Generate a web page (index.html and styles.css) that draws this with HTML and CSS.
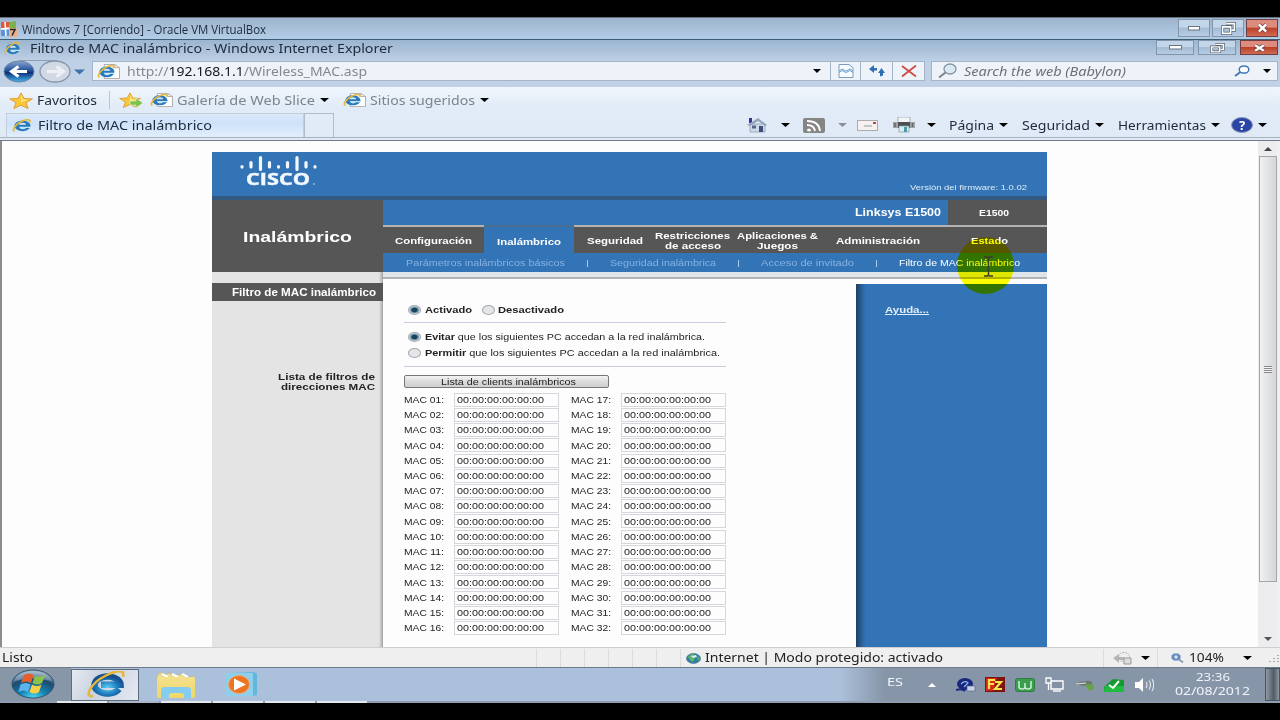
FILE: index.html
```html
<!DOCTYPE html>
<html lang="es">
<head>
  <meta charset="UTF-8" />
  <title>Filtro de MAC inalámbrico</title>
  <link rel="stylesheet" href="styles.css">
</head>
<body>

  <!-- Iconos compartidos -->
  <svg width="0" height="0" class="defs">
    <defs>
      <radialGradient id="ieBlue" cx="50%" cy="65%" r="65%">
        <stop offset="0" stop-color="#5fd0f5"/><stop offset=".6" stop-color="#1f7fc0"/><stop offset="1" stop-color="#174f8e"/>
      </radialGradient>
      <radialGradient id="orb" cx="50%" cy="100%" r="95%">
        <stop offset="0" stop-color="#4fe0fa"/><stop offset=".35" stop-color="#1583b0"/><stop offset=".7" stop-color="#1d4a70"/><stop offset="1" stop-color="#8fa9bf"/>
      </radialGradient>
      <linearGradient id="backBlue" x2="0" y2="1">
        <stop offset="0" stop-color="#8aa6d0"/><stop offset=".45" stop-color="#24529c"/><stop offset=".55" stop-color="#0d3077"/><stop offset="1" stop-color="#43b5ef"/>
      </linearGradient>
      <linearGradient id="folder" x2="0" y2="1">
        <stop offset="0" stop-color="#f3e08d"/><stop offset="1" stop-color="#f0d765"/>
      </linearGradient>
      <symbol id="ie" viewBox="0 0 20 16" preserveAspectRatio="none">
        <ellipse cx="10.5" cy="8.4" rx="8" ry="6.600" fill="#2a79bd"/>
        <path d="M7 7q0-2.500 3.500-2.500T14 7z" fill="#d5ebf7"/>
        <path d="M7 9.400h12v1.600h-5q-1 1.500-3.500 1.500T7 9.400z" fill="#c4e5f6"/>
        <path d="M2.400 15.200C-1 12 7 2 15 1c3-.4 3.400 1.200 2.600 2.800" fill="none" stroke="#e5b93a" stroke-width="1.900"/>
      </symbol>
      <symbol id="iepage" viewBox="0 0 22 16" preserveAspectRatio="none">
        <path d="M7 .5h10l4.500 3.500v11.500H7z" fill="#fff" stroke="#9a9a9a" stroke-width=".8"/>
        <path d="M17 .5V4h4.500" fill="none" stroke="#9a9a9a" stroke-width=".8"/>
        <use href="#ie" x="0" y="1" width="18" height="14"/>
      </symbol>
      <symbol id="arrow" viewBox="0 0 8 4" preserveAspectRatio="none"><path d="M0 0h8L4 4z"/></symbol>
      <symbol id="star" viewBox="0 0 24 18" preserveAspectRatio="none">
        <path d="M12 1l3 5.800 8.300.5-6.300 4 2.200 6.200L12 14l-7.200 3.500L7 11.300.7 7.300 9 6.800z" fill="#fbc63a" stroke="#d9962a" stroke-width=".9"/>
        <path d="M12 3l2 4.600 5 .5-7 3z" fill="#ffe56f"/>
      </symbol>
      <symbol id="restore" viewBox="0 0 14 12" preserveAspectRatio="none">
        <path d="M5 1.500h7.500v6H10M1.500 4.500H9v6H1.500z" fill="none" stroke="#56606e" stroke-width="2.800"/>
        <path d="M5 1.500h7.500v6H10M1.500 4.500H9v6H1.500z" fill="none" stroke="#fff" stroke-width="1.500"/>
      </symbol>
      <symbol id="close" viewBox="0 0 12 10" preserveAspectRatio="none">
        <path d="M2 1.500l8 7M10 1.500l-8 7" stroke="#6b4048" stroke-width="4"/>
        <path d="M2 1.500l8 7M10 1.500l-8 7" stroke="#fff" stroke-width="2.500"/>
      </symbol>
    </defs>
  </svg>

  <!-- Ventana VirtualBox -->
  <div class="vbox-title">
    <svg class="vbox-icon" viewBox="0 0 16 16"><path d="M0 1h9l-1 7H0z" fill="#e0593b"/><path d="M0 9h8v6H0z" fill="#5d93d6"/><path d="M9 1l6-1v7H9z" fill="#78b44b"/><path d="M8 7h8v9H8z" fill="#e9b18a"/><path d="M4 1L5 15M0 8l8-1" stroke="#fff" stroke-width="1.500"/><path d="M9 8.500h5l-3 6" fill="none" stroke="#222" stroke-width="1.500"/></svg>
    <span class="t" data-w="244">Windows 7 [Corriendo] - Oracle VM VirtualBox</span>
    <div class="win-buttons outer">
      <i class="wb"><svg width="12" height="5"><rect x=".5" y=".5" width="11" height="3.500" fill="#fff" stroke="#6b7480"/></svg></i>
      <i class="wb"><svg width="15" height="13"><use href="#restore"/></svg></i>
      <i class="wb red"><svg width="11" height="10"><use href="#close"/></svg></i>
    </div>
  </div>

  <!-- Internet Explorer -->
  <div class="ie-frame">
    <div class="ie-title">
      <svg width="17" height="13"><use href="#ie"/></svg>
      <span class="t" data-w="363">Filtro de MAC inalámbrico - Windows Internet Explorer</span>
      <div class="win-buttons inner">
        <i class="wb"><svg width="13" height="5"><rect x=".5" y=".5" width="12" height="3.500" fill="#fff" stroke="#6b7480"/></svg></i>
        <i class="wb"><svg width="15" height="10"><use href="#restore"/></svg></i>
        <i class="wb red"><svg width="13" height="8"><use href="#close"/></svg></i>
      </div>
    </div>
    <div class="ie-nav">
      <svg class="history" width="84" height="24" viewBox="0 0 84 24">
        <path d="M16 1.500h38" stroke="#8e9fb4"/>
        <ellipse cx="16" cy="12.500" rx="15" ry="10.500" fill="url(#backBlue)" stroke="#6c84a5"/>
        <path d="M24 12.500H10M15.500 7.500l-7 5 7 5" fill="none" stroke="#fff" stroke-width="3"/>
        <ellipse cx="52" cy="12.500" rx="15" ry="10.500" fill="#d0d9e4" stroke="#8796a9" stroke-width="1.300"/>
        <path d="M44 12.500h14M53.500 7.500l7 5-7 5" fill="none" stroke="#edf1f6" stroke-width="3"/>
        <path d="M71 10.500h11l-5.500 5z" fill="#3f72ad"/>
      </svg>
      <div class="address">
        <svg width="23" height="15"><use href="#iepage"/></svg>
        <span class="t url" data-w="240">http://<b>192.168.1.1</b>/Wireless_MAC.asp</span>
        <svg class="arrow" width="8" height="4"><use href="#arrow"/></svg>
      </div>
      <div class="nav-btn w30"><svg width="16" height="14" viewBox="0 0 16 14"><path d="M1 .5h10l4 3v10H1z" fill="#f8fbff" stroke="#7d9cc0"/><path d="M1 7l3-2 4 2 4-2 3 2M1 8.500l3-2 4 2 4-2 3 2" fill="none" stroke="#6fa2cf"/></svg></div>
      <div class="nav-btn w32"><svg width="16" height="12" viewBox="0 0 16 12"><path d="M0 4l5-4v3h3v2.500H5V8zM9 8l3.500-5L16 8h-2v2.500l-3 1V8z" fill="#2f6fb6"/></svg></div>
      <div class="nav-btn w32"><svg width="16" height="12" viewBox="0 0 16 12"><path d="M1 1l14 10.500M15 .5L1 11.500" stroke="#cf4a43" stroke-width="1.800"/></svg></div>
      <div class="search">
        <svg width="20" height="16" viewBox="0 0 20 16"><ellipse cx="13" cy="6" rx="6" ry="5" fill="#dbe9f4" stroke="#8094a8" stroke-width="1.300"/><path d="M8.500 9.500L2 14.500" stroke="#7f8790" stroke-width="2.200"/></svg>
        <span class="t" data-w="162">Search the web (Babylon)</span>
        <svg class="glass" width="16" height="12" viewBox="0 0 16 12"><ellipse cx="10" cy="4.500" rx="4.800" ry="3.600" fill="#fff" stroke="#4178b8" stroke-width="1.500"/><path d="M6.500 7L1 11" stroke="#4178b8" stroke-width="2"/></svg>
        <svg class="arrow" width="8" height="4"><use href="#arrow"/></svg>
      </div>
    </div>
  </div>

  <div class="ie-bars">
    <div class="favorites">
      <svg width="24" height="17"><use href="#star"/></svg>
      <span class="t dark" data-w="60">Favoritos</span>
      <i class="sep"></i>
      <svg class="addfav" width="24" height="16"><use href="#star" width="22" height="16"/><path d="M11 9h6V6l7 5-7 5v-3h-6z" fill="#7cc24b" stroke="#fff" stroke-width=".5"/></svg>
      <svg class="slice" width="23" height="14"><use href="#iepage"/></svg>
      <span class="t grey" data-w="138">Galería de Web Slice</span>
      <svg class="arrow" width="9" height="4"><use href="#arrow"/></svg>
      <svg class="sites" width="23" height="14"><use href="#iepage"/></svg>
      <span class="t grey" data-w="105">Sitios sugeridos</span>
      <svg class="arrow" width="9" height="4"><use href="#arrow"/></svg>
    </div>
    <div class="tabs">
      <div class="tab">
        <svg width="20" height="13"><use href="#ie"/></svg>
        <span class="t" data-w="174">Filtro de MAC inalámbrico</span>
      </div>
      <div class="newtab"></div>
      <div class="commands">
        <svg width="21" height="16" viewBox="0 0 21 16"><path d="M2 1h3v5H2z" fill="#34349a"/><path d="M3 7h15v8H3z" fill="#cfd9ea" stroke="#8793ab" stroke-width=".7"/><path d="M0 8l11-7 9 7-2 1-7-5-8 5z" fill="#94a5bd"/><path d="M12 9h4v6h-4z" fill="#3c4f7d"/><path d="M5 8.500h4v3H5z" fill="#55688c"/></svg>
        <svg class="arrow c1" width="9" height="4"><use href="#arrow"/></svg>
        <svg class="c2" width="22" height="15" viewBox="0 0 22 15"><rect width="22" height="15" rx="2" fill="#858585"/><g fill="none" stroke="#fff" stroke-width="1.800"><path d="M4 3q12 0 13 10M4 7q7 0 8 6"/></g><ellipse cx="6" cy="12" rx="2" ry="1.500" fill="#fff"/></svg>
        <svg class="arrow c3" width="9" height="4"><use href="#arrow"/></svg>
        <svg class="c4" width="21" height="11" viewBox="0 0 21 11"><rect x=".5" y=".5" width="20" height="10" fill="#f4f1f0" stroke="#b0abab"/><path d="M7 6h8" stroke="#999"/><path d="M16 2h3v2h-3z" fill="#c4473f"/></svg>
        <svg class="c5" width="24" height="16" viewBox="0 0 24 16"><path d="M6 0h12v6H6z" fill="#f2f4f6" stroke="#8f979d" stroke-width=".7"/><path d="M1 5h22v6H1z" fill="#a0a3a6"/><path d="M6 5h12v6H6z" fill="#4c5054"/><path d="M3 6v4M20.500 6v4" stroke="#666" stroke-width="1.500"/><path d="M7 9h10v6H7z" fill="#d6eef0" stroke="#85999d" stroke-width=".7"/><path d="M12 10h3v5h-3z" fill="#4a9ba6"/></svg>
        <svg class="arrow c6" width="9" height="4"><use href="#arrow"/></svg>
        <span class="t c7" data-w="45">Página</span>
        <svg class="arrow c8" width="9" height="4"><use href="#arrow"/></svg>
        <span class="t c9" data-w="68">Seguridad</span>
        <svg class="arrow c8" width="9" height="4"><use href="#arrow"/></svg>
        <span class="t c9" data-w="88">Herramientas</span>
        <svg class="arrow c8" width="9" height="4"><use href="#arrow"/></svg>
        <svg class="c10" width="22" height="16" viewBox="0 0 22 16"><ellipse cx="11" cy="8" rx="10.500" ry="7.500" fill="#2b45a4" stroke="#8b98bb"/><text x="11" y="12.500" text-anchor="middle" class="qm">?</text></svg>
        <svg class="arrow c8" width="9" height="4"><use href="#arrow"/></svg>
      </div>
    </div>
  </div>

  <!-- Página del router -->
  <div class="viewport">
    <div class="page">
      <div class="head">
        <svg class="cisco" width="82" height="36" viewBox="0 0 82 36">
          <g stroke="#f2f8ff" stroke-width="3.200" stroke-linecap="round">
            <path d="M4 11.500v.6M13 7.500v4.500M22.500 2.500v12M31.500 7.500v4.500M40.500 11.500v.6M49.500 7.500v4.500M59 2.500v12M68 7.500v4.500M77 11.500v.6"/>
          </g>
          <text x="8" y="30" textLength="64" lengthAdjust="spacingAndGlyphs">CISCO</text>
          <circle cx="76" cy="29" r=".8" fill="#dce9f7"/>
        </svg>
        <span class="t firmware" data-w="117">Versión del firmware: 1.0.02</span>
      </div>
      <div class="menu">
        <div class="menu-title"><span class="t" data-w="109">Inalámbrico</span></div>
        <div class="menu-body">
          <div class="model">
            <div class="model-name"><span class="t" data-w="86">Linksys E1500</span></div>
            <div class="model-id"><span class="t" data-w="30">E1500</span></div>
          </div>
          <div class="nav">
            <div class="n1"><span class="t" data-w="77">Configuración</span></div>
            <div class="n2 active"><span class="t" data-w="64">Inalámbrico</span></div>
            <div class="n3"><span class="t" data-w="56">Seguridad</span></div>
            <div class="n4"><span class="t" data-w="75">Restricciones</span><span class="t" data-w="56">de acceso</span></div>
            <div class="n5"><span class="t" data-w="81">Aplicaciones &amp;</span><span class="t" data-w="41">Juegos</span></div>
            <div class="n6"><span class="t" data-w="84">Administración</span></div>
            <div class="n7"><span class="t" data-w="37">Estado</span></div>
          </div>
          <div class="subnav">
            <span class="t" data-w="159">Parámetros inalámbricos básicos</span><i></i>
            <span class="t" data-w="106">Seguridad inalámbrica</span><i></i>
            <span class="t" data-w="93">Acceso de invitado</span><i></i>
            <span class="t on" data-w="121">Filtro de MAC inalámbrico</span>
          </div>
        </div>
      </div>
      <div class="main">
        <div class="side">
          <div class="side-title"><span class="t" data-w="144">Filtro de MAC inalámbrico</span></div>
          <div class="side-label">
            <span class="t" data-w="97">Lista de filtros de</span>
            <span class="t" data-w="94">direcciones MAC</span>
          </div>
        </div>
        <div class="content">
          <div class="row r1">
            <i class="radio checked"></i><span class="t" data-w="47"><b>Activado</b></span>
            <i class="radio second"></i><span class="t" data-w="66"><b>Desactivado</b></span>
          </div>
          <div class="line"></div>
          <div class="row r2"><i class="radio checked"></i><span class="t" data-w="280"><b>Evitar</b> que los siguientes PC accedan a la red inalámbrica.</span></div>
          <div class="row r3"><i class="radio"></i><span class="t" data-w="295"><b>Permitir</b> que los siguientes PC accedan a la red inalámbrica.</span></div>
          <div class="line"></div>
          <div class="clients"><span class="t" data-w="135">Lista de clients inalámbricos</span></div>
          <div class="macs" id="macs"></div>
        </div>
        <div class="help"><span class="t" data-w="44">Ayuda...</span></div>
      </div>
    </div>
    <div class="scrollbar">
      <svg class="up" width="8" height="4" viewBox="0 0 8 4"><path d="M0 4h8L4 0z" fill="#444"/></svg>
      <div class="thumb"><i></i></div>
      <svg class="down" width="8" height="4"><use href="#arrow" fill="#555"/></svg>
    </div>
    <!-- resaltado del puntero -->
    <div class="spot"></div>
    <svg class="caret" width="9" height="21" viewBox="0 0 9 21"><path d="M0 1h3.500l1 1 1-1H9M4.500 1.500v18M0 20h3.500l1-1 1 1H9" fill="none" stroke="#3d3d2c" stroke-width="1.500"/></svg>
  </div>

  <div class="status">
    <span class="t" data-w="31">Listo</span>
    <div class="cells"><i></i><i></i><i></i><i></i><i></i><i></i><i></i></div>
    <svg class="globe" width="15" height="11" viewBox="0 0 15 11"><ellipse cx="7.500" cy="5.500" rx="7" ry="5" fill="#2d7ea5" stroke="#4a7890" stroke-width=".7"/><path d="M2 4q3-4 6-3l-2 3 3 1-2 4q-3-1-5-5zM11 4l3 1-2 3z" fill="#5fb765"/><path d="M5 3l5-1 1 2-4 1z" fill="#d6efef"/></svg>
    <span class="t" data-w="238">Internet | Modo protegido: activado</span>
    <div class="status-right">
      <i></i>
      <svg class="s0" width="19" height="13" viewBox="0 0 19 13"><path d="M0 6l6-4v3h5v3H6v3z" fill="#b5b5b5"/><ellipse cx="11" cy="5" rx="5.500" ry="4.500" fill="none" stroke="#b0b0b0" stroke-dasharray="2 1"/><path d="M11 6h7v6h-7z" fill="#ddd" stroke="#999"/></svg>
      <svg class="arrow s1" width="9" height="4"><use href="#arrow"/></svg>
      <i></i>
      <svg class="s2" width="13" height="10" viewBox="0 0 13 10"><ellipse cx="5" cy="4" rx="4.500" ry="3.500" fill="#5d86bd" stroke="#a6bcd8"/><path d="M5 2v4M3 4h4" stroke="#fff"/><path d="M8 6.500l4 3" stroke="#8996a8" stroke-width="1.600"/></svg>
      <span class="t" data-w="35">104%</span>
      <svg class="arrow s3" width="9" height="4"><use href="#arrow"/></svg>
      <svg class="grip" width="12" height="9" viewBox="0 0 12 9"><path d="M9 1h2v1H9zM5 4h2v1H5zM9 4h2v1H9zM1 7h2v1H1zM5 7h2v1H5zM9 7h2v1H9z" fill="#aaa"/></svg>
    </div>
  </div>

  <!-- Barra de tareas -->
  <div class="taskbar">
    <div class="start">
      <svg width="44" height="30" viewBox="0 0 44 30"><ellipse cx="22" cy="15" rx="21" ry="14" fill="url(#orb)" stroke="#34556f"/><path d="M3 12Q8 2 22 2t19 10q-19-5-38 0z" fill="#fff" opacity=".25"/><path d="M13 6q5-3 9.500 0l-2.500 8q-4.500-3-10 0z" fill="#e5602c"/><path d="M24 7q5 2 10.500-1L31 14q-4.500 3-9.500 0z" fill="#8cc249"/><path d="M9.500 15.500q5-3 10 0L17 23q-4-3-9.500 0z" fill="#5fb3ed"/><path d="M21 15.500q5 3 9.500 0L28 23q-4.500 3-9.500 0z" fill="#f8cf45"/></svg>
    </div>
    <div class="task">
      <svg width="38" height="28" viewBox="0 0 38 28"><path d="M32 18A13 8.500 0 1 1 33.500 13.800H14" fill="none" stroke="url(#ieBlue)" stroke-width="6.500"/><path d="M6 25C-4 27 4 12 18 5S38-1 36 6" fill="none" stroke="#e6b735" stroke-width="2.500"/></svg>
    </div>
    <svg class="explorer" width="40" height="28" viewBox="0 0 40 28"><path d="M1 5l3-4 5 3 4-2 6 3 6-2 4 3h7l2-2v7H1z" fill="#eadb8e" stroke="#c3b067" stroke-width=".6"/><path d="M6 3l6 3M16 3l6 3M26 3l6 3" stroke="#fff" stroke-width="2"/><rect x="1" y="6" width="38" height="21" rx="1.500" fill="url(#folder)"/><path d="M5 27V19q0-3 4-3h22q4 0 4 3v8h-7v-3q0-2-4-2h-8q-3 0-3 2v3z" fill="#84cdf0"/></svg>
    <svg class="player" width="31" height="25" viewBox="0 0 31 25"><path d="M6 1l22-1 3 2v21l-4 1H6z" fill="#63b7dd"/><rect y="1" width="27" height="23" rx="1" fill="#8ed0eb"/><ellipse cx="13" cy="12.500" rx="10.500" ry="9" fill="#ee7422" stroke="#f7a667"/><path d="M8 6.500l12 6-12 6z" fill="#fff"/></svg>
    <div class="tray">
      <span class="t lang" data-w="16">ES</span>
      <svg class="up2" width="8" height="4" viewBox="0 0 8 4"><path d="M0 4h8L4 0z" fill="#fff"/></svg>
      <svg class="k1" width="20" height="14" viewBox="0 0 20 14"><ellipse cx="9" cy="6" rx="8" ry="6" fill="#1b277d"/><path d="M5 6q4-4 7-1l-4 4" fill="none" stroke="#8fb3ef" stroke-width="1.200"/><path d="M0 12q6-2 9 1" stroke="#1b277d" stroke-width="2" fill="none"/><path d="M11 8h8v5h-8z" fill="#c8d4e6" stroke="#5a6b8a" stroke-width=".7"/></svg>
      <svg class="k2" width="20" height="15" viewBox="0 0 20 15"><path d="M0 0h20v15H0z" fill="#7c1412"/><path d="M1 1h11L8 14H1z" fill="#d42a1a"/><path d="M4 12V3h6M4 7h5M10 5h6l-6 7h7" fill="none" stroke="#f5e54b" stroke-width="2.200"/></svg>
      <svg class="k3" width="20" height="14" viewBox="0 0 20 14"><rect x=".5" y=".5" width="19" height="13" rx="2" fill="#3b9b4e" stroke="#2e7d40"/><path d="M4 3v6q0 2 3 2t3-2V5v4q0 2 3 2t3-2V3" fill="none" stroke="#c6efca" stroke-width="1.600"/></svg>
      <svg class="k4" width="19" height="15" viewBox="0 0 19 15"><path d="M6 4h12v8H6z" fill="#8292a5" stroke="#fff" stroke-width="1.400"/><path d="M8 14h8" stroke="#fff" stroke-width="1.400"/><path d="M1 1h5v5H1zM3.500 6v7" fill="#8292a5" stroke="#fff" stroke-width="1.300"/></svg>
      <svg class="k5" width="20" height="12" viewBox="0 0 20 12"><path d="M0 5q8-4 16-3l2 4-9 1z" fill="#6c7971"/><path d="M1 5l10-1" stroke="#dfe6e2"/><path d="M10 6l8-1 1 5-5 2z" fill="#69a347"/></svg>
      <svg class="k6" width="21" height="14" viewBox="0 0 21 14"><path d="M0 9L9 1l11 1v11H0z" fill="#149a2f"/><path d="M1 8h19v6H0z" fill="#1fbb3f"/><path d="M5 7l4 3 6-7" fill="none" stroke="#fff" stroke-width="2"/></svg>
      <svg class="k7" width="19" height="14" viewBox="0 0 19 14"><path d="M0 4h4l4-4v14l-4-4H0z" fill="#fff"/><path d="M11 4q2 3 0 6M14 2.500q3 4.500 0 9M17 1q3.500 6 0 12" fill="none" stroke="#e4eaf0" stroke-width="1.100"/></svg>
      <div class="clock"><span class="t" data-w="34">23:36</span><span class="t" data-w="75">02/08/2012</span></div>
      <div class="show-desktop"></div>
    </div>
  </div>
  <div class="under"><i></i><i></i><i></i><i></i><i></i><i></i></div>

  <script src="script.js"></script>
</body>
</html>
```
FILE: styles.css
```css
* {
  box-sizing: border-box;
}

body {
  margin: 0;
  width: 1280px;
  height: 720px;
  overflow: hidden;
  background: #000;
  padding-top: 17px;
  font-family: "Noto Sans", "Open Sans", sans-serif;
  font-size: 12px;
  line-height: 1;
  color: #1d2a3a;
}

.defs {
  position: absolute;
}

svg {
  display: block;
  flex: none;
}

i {
  display: block;
  flex: none;
}

.t {
  display: inline-block;
  flex: none;
  white-space: nowrap;
  transform-origin: 0 50%;
}

/* Ventana VirtualBox */
.vbox-title {
  height: 22px;
  display: flex;
  align-items: center;
  background: linear-gradient(#9db3cc, #b4cde6);
  border-top: 1px solid #64717f;
}

.vbox-icon {
  width: 16px;
  height: 16px;
  margin: 0 5px 0 1px;
}

.vbox-title .t {
  font-family: "Open Sans", sans-serif;
  padding-top: 2px;
}

.win-buttons {
  margin-left: auto;
  display: flex;
  gap: 2px;
}

.wb {
  width: 32px;
  height: 18px;
  display: flex;
  align-items: center;
  justify-content: center;
  background: linear-gradient(#c3d5e8 45%, #a5bcd5 50%, #b6cde5);
  border: 1px solid #8295ab;
}

.wb.red {
  background: linear-gradient(#dd8b7c 45%, #bb4029 50%, #d16b53);
  border-color: #713e44;
}

.outer {
  margin-right: 2px;
}

.outer .wb {
  margin-top: -1px;
}

.inner {
  gap: 4px;
  align-self: flex-start;
}

.inner .wb {
  width: 38px;
  height: 15px;
}

/* Internet Explorer */
.ie-frame {
  height: 48px;
  background: linear-gradient(#9bb5d0, #bed0e5 45%, #c1d1e6);
  border-top: 1px solid #3c5d75;
}

.ie-title {
  height: 17px;
  display: flex;
  align-items: center;
  padding: 0 2px 0 4px;
  gap: 9px;
}

.ie-title .t {
  padding-top: 1px;
}

.ie-nav {
  height: 27px;
  display: flex;
  align-items: center;
  padding: 1px 0 0 3px;
}

.history {
  margin-right: 5px;
}

.address, .nav-btn, .search {
  height: 20px;
  background: #eef3f9;
  border: 1px solid #a4b5c8;
  display: flex;
  align-items: center;
}

.address .t, .search .t {
  padding-top: 1px;
}

.address {
  width: 739px;
  padding-left: 4px;
}

.url {
  margin-left: 7px;
  color: #85898e;
}

.url b {
  font-weight: normal;
  color: #16181c;
}

.address .arrow {
  margin-left: auto;
  margin-right: 9px;
}

.nav-btn {
  border-left: 0;
  justify-content: center;
}

.w30 { width: 30px; }
.w32 { width: 32px; }

.search {
  margin-left: 6px;
  width: 347px;
  padding-left: 5px;
}

.search .t {
  margin-left: 7px;
  font-style: italic;
  color: #6c7177;
}

.glass {
  margin-left: auto;
}

.search .arrow {
  margin: 0 6px 0 13px;
}

.ie-bars {
  height: 54px;
  background: linear-gradient(#f0f6fd, #e2ecf8 35%, #e0eaf6);
  border-bottom: 1px solid #747b84;
}

.favorites {
  height: 26px;
  display: flex;
  align-items: center;
  padding-left: 9px;
}

.favorites .t {
  padding-top: 1px;
}

.dark {
  margin-left: 4px;
}

.grey {
  color: #7c848d;
}

.sep {
  width: 1px;
  height: 18px;
  margin-left: 12px;
  background: #bcc6d2;
}

.addfav { margin-left: 9px; }
.slice { margin: 0 4px 0 7px; }
.sites { margin: 0 4px 0 14px; }
.favorites .arrow { margin-left: 5px; }

.tabs {
  height: 25px;
  display: flex;
  border-bottom: 1px solid #abb2bb;
}

.tab {
  width: 298px;
  margin-left: 6px;
  padding-left: 5px;
  display: flex;
  align-items: center;
  gap: 6px;
  background: linear-gradient(#dae9fa, #cde2f9 40%, #e2eefb);
  border: 1px solid #c3cedb;
  border-bottom: 0;
}

.tabs .t {
  padding-top: 1px;
}

.newtab {
  width: 30px;
  border: 1px solid #b3bcc8;
  border-bottom: 0;
}

.commands {
  display: flex;
  align-items: center;
  margin-left: 413px;
}

.c1 { margin-left: 13px; }
.c2 { margin-left: 13px; }
.c3 { margin-left: 13px; fill: #8b8f95; }
.c4 { margin-left: 10px; }
.c5 { margin-left: 14px; }
.c6 { margin-left: 11px; }
.c7 { margin-left: 13px; }
.c8 { margin-left: 5px; }
.c9 { margin-left: 14px; }
.c10 { margin-left: 11px; }

.qm {
  font: bold 13px "Noto Sans", sans-serif;
  fill: #fff;
}

/* Página */
.viewport {
  position: relative;
  height: 506px;
  background: #fdfdfd;
  border-left: 2px solid #8a8d91;
  border-right: 3px solid #f0f0f0;
  display: flex;
  overflow: hidden;
}

.page {
  width: 835px;
  margin: 11px 0 0 210px;
  font-family: "Liberation Sans", Arial, sans-serif;
  font-size: 9.5px;
  color: #222;
}

.head {
  height: 48px;
  background: #3374b6;
  border-bottom: 4px solid #315981;
  display: flex;
  justify-content: space-between;
}

.cisco {
  margin: 3px 0 0 26px;
}

.cisco text {
  font: bold 15.5px "Open Sans", sans-serif;
  fill: #f2f8ff;
  stroke: #f2f8ff;
  stroke-width: .4;
}

.firmware {
  align-self: flex-end;
  margin-right: 20px;
  padding-bottom: 4px;
  font-size: 8px;
  color: #e0ecf8;
}

.head .firmware {
  position: relative;
  left: -20px;
}

.menu {
  height: 72px;
  display: flex;
  background: #565656;
  color: #fff;
  font-weight: bold;
}

.menu-title {
  width: 171px;
  font-size: 15px;
  display: flex;
  align-items: center;
  justify-content: center;
}

.model {
  height: 25px;
  display: flex;
}

.model-name {
  width: 565px;
  padding-right: 7px;
  background: #3374b6;
  display: flex;
  align-items: center;
  justify-content: flex-end;
  font-size: 11px;
}

.model-id {
  width: 99px;
  display: flex;
  align-items: center;
  padding-left: 31px;
}

.nav {
  height: 28px;
  display: flex;
}

.nav div {
  border-top: 2px solid #b3b3b3;
  padding-top: 1px;
  display: flex;
  flex-direction: column;
  justify-content: center;
  align-items: center;
}

.nav .active {
  background: #3374b6;
  border-top-color: #4b6d8f;
  padding-top: 3px;
}

.n1 { width: 101px; }
.n2 { width: 90px; }
.n3 { width: 81px; }
.n4 { width: 75px; }
.n5 { width: 94px; }
.n6 { width: 108px; }
.n7 { width: 115px; }

.subnav {
  height: 19px;
  background: #3374b6;
  display: flex;
  align-items: center;
  padding: 1px 0 0 23px;
  font-weight: normal;
  color: #86b2e3;
}

.subnav i {
  width: 1px;
  height: 7px;
  background: #a9cbee;
  margin: 0 22px 0 22px;
}

.subnav .on {
  color: #fff;
}

.main {
  display: flex;
  height: 375px;
}

.side {
  width: 171px;
  padding-top: 11px;
  background: linear-gradient(to right, #e4e4e4 167px, #a2a2a2);
}

.side-title {
  height: 18px;
  background: #565656;
  color: #fff;
  font-weight: bold;
  font-size: 10px;
  display: flex;
  align-items: center;
  padding: 1px 0 0 20px;
}

.side-label {
  padding: 71px 8px 0 0;
  display: flex;
  flex-direction: column;
  align-items: flex-end;
  font-weight: bold;
}

.content {
  width: 473px;
  border-top: 5px solid #e0e5eb;
  padding-left: 21px;
  box-shadow: inset 0 2px 0 #b0b2b5;
}

.row {
  display: flex;
  align-items: center;
  height: 16px;
  padding-left: 4px;
}

.r1 { margin-top: 25px; }
.r2 { margin-top: 6px; }

.radio {
  width: 13px;
  height: 10px;
  border: 1px solid #a4a9ae;
  border-radius: 50%;
  background: #e4e6e9;
  margin: -1px 4px 0 0;
}

.radio.checked {
  background: radial-gradient(#16435f 30%, #c3d3dd 65%);
}

.radio.second {
  margin-left: 10px;
  margin-right: 3px;
}

.line {
  width: 322px;
  height: 1px;
  background: #c9cde0;
  margin-top: 4px;
}

.r2 + .r3 + .line {
  margin-top: 5px;
}

.clients {
  width: 205px;
  height: 13px;
  margin-top: 8px;
  border: 1px solid #777;
  border-radius: 2px;
  background: linear-gradient(#f4f4f4, #dcdcdc 50%, #cfcfcf);
  display: flex;
  align-items: center;
  justify-content: center;
  padding-left: 3px;
}

.macs {
  margin-top: 4px;
  height: 243.700px;
  width: 322px;
  display: grid;
  grid-auto-flow: column;
  grid-template-rows: repeat(16, 1fr);
  grid-template-columns: 155px 155px;
  column-gap: 12px;
}

.mac {
  display: flex;
  align-items: center;
  justify-content: space-between;
}

.field {
  width: 105px;
  height: 14px;
  border: 1px solid #d6d6dc;
  padding-left: 2px;
  display: flex;
  align-items: center;
}

.help {
  width: 191px;
  box-shadow: inset 0 5px 0 #e0e5eb, inset 0 7px 0 #b0b2b5;
  padding-top: 12px;
  color: #e2effd;
  font-weight: bold;
  background: linear-gradient(to right, #1d3f63, #2d68a5 7px, #3374b6 10px) 0 12px no-repeat;
}

.help .t {
  text-decoration: underline;
  margin: 21px 0 0 29px;
}

.scrollbar {
  margin-left: auto;
  width: 19px;
  background: #ededef;
  display: flex;
  flex-direction: column;
  align-items: center;
}

.up { margin-top: 6px; }

.thumb {
  width: 18px;
  height: 426px;
  margin-top: 5px;
  border: 1px solid #a3a6aa;
  background: linear-gradient(to right, #f1f1f2, #d5d6da);
  display: flex;
  align-items: center;
  justify-content: center;
}

.thumb i {
  width: 8px;
  height: 7px;
  background: repeating-linear-gradient(#888 0 1px, #f4f4f4 1px 2px);
}

.down {
  margin: auto 0 6px;
}

.spot {
  position: absolute;
  left: 955px;
  top: 96px;
  width: 57px;
  height: 57px;
  border-radius: 50%;
  background: #ff0;
  mix-blend-mode: multiply;
}

.caret {
  position: absolute;
  left: 982px;
  top: 115px;
}

/* Barra de estado */
.status {
  height: 20px;
  background: #f0efef;
  border-top: 1px solid #cfcfcf;
  display: flex;
  align-items: center;
  padding: 1px 0 0 2px;
  color: #222;
}

.cells {
  margin-left: 503px;
  display: flex;
  gap: 23px;
}

.cells i, .status-right i {
  width: 1px;
  height: 18px;
  background: #dedbdb;
}

.globe {
  margin: 0 4px 0 5px;
}

.status-right {
  margin-left: auto;
  display: flex;
  align-items: center;
}

.s0 { margin-left: 9px; }
.s1 { margin: 0 7px 0 9px; }
.s2 { margin: 0 5px 0 13px; }
.s3 { margin: 0 16px 0 19px; }

/* Barra de tareas */
.taskbar {
  height: 34px;
  background: #abc0da;
  border-top: 1px solid #6d7a89;
  display: flex;
  align-items: center;
}

.start {
  width: 71px;
  height: 33px;
  padding: 1px 0 0 11px;
  background: #8797a8;
}

.task {
  width: 68px;
  height: 32px;
  border: 1px solid #5e6b7b;
  background: linear-gradient(120deg, #e6ebf2, #c9d2e0 40%, #e4eaf3);
  display: flex;
  align-items: center;
  padding-left: 15px;
}

.explorer { margin-left: 17px; }
.player { margin-left: 30px; }

.tray {
  margin-left: auto;
  width: 440px;
  height: 33px;
  padding-left: 47px;
  background: linear-gradient(to right, #abc0da, #8696a8 45px);
  display: flex;
  align-items: center;
  color: #f1f4f8;
}

.lang { font-size: 10.5px; padding-bottom: 4px; }
.up2 { margin-left: 25px; }
.k1 { margin-left: 20px; }
.k2 { margin-left: 9px; }
.k3, .k4 { margin-left: 10px; }
.k5 { margin-left: 11px; }
.k6 { margin-left: 9px; }
.k7 { margin-left: 10px; }

.clock {
  margin: -2px 0 0 21px;
  width: 75px;
  display: flex;
  flex-direction: column;
  align-items: center;
  gap: 3px;
  font-size: 11.5px;
}

.show-desktop {
  margin-left: auto;
  width: 15px;
  height: 33px;
  background: linear-gradient(to right, #8f99a3, #525c66 60%, #8f99a3);
  border: 1px solid #485564;
}

.under {
  height: 2px;
  display: flex;
  gap: 2px;
  padding-left: 57px;
  background: #8e9eb0;
}

.under i {
  width: 50px;
  background: #e4e7eb;
}

.under i:nth-child(2) {
  background: #a9b6c6;
}
```
FILE: script.js
```js
// Lista de direcciones MAC
const macs = document.getElementById('macs');

for (let i = 1; i <= 32; i++) {
  const row = document.createElement('div');
  row.className = 'mac';
  row.innerHTML = '<span class="t" data-w="40">MAC ' + String(i).padStart(2, '0') + ':</span>' +
    '<div class="field"><span class="t" data-w="87">00:00:00:00:00:00</span></div>';
  macs.appendChild(row);
}

// Ensancha cada texto hasta el ancho indicado
document.querySelectorAll('.t').forEach(el => {
  const natural = el.getBoundingClientRect().width;
  const wanted = Number(el.dataset.w);
  el.style.transform = 'scaleX(' + wanted / natural + ')';
  el.style.marginRight = (wanted - natural) + 'px';
});
```
